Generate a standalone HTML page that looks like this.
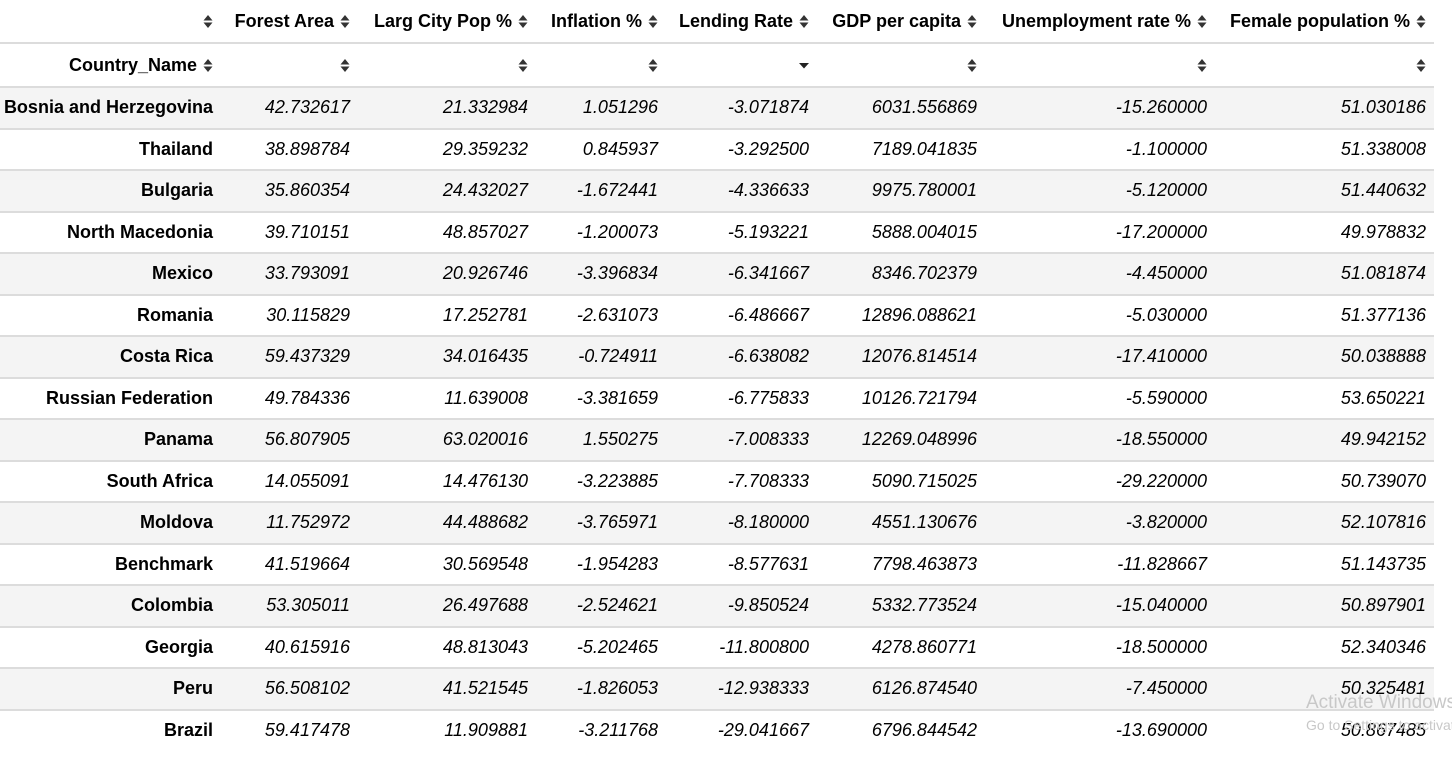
<!DOCTYPE html>
<html><head><meta charset="utf-8"><style>
body{margin:0;background:#fff;font-family:"Liberation Sans",Arial,sans-serif;color:#000;}
table{border-collapse:separate;border-spacing:0;width:1434px;table-layout:fixed;font-size:18px;}
td,th{padding:0 8px 0 0;text-align:right;white-space:nowrap;overflow:visible;}
th{font-weight:bold;height:42px;border-bottom:2px solid #dcdcdc;}
td{height:39.5px;border-bottom:2px solid #dcdcdc;font-style:italic;}
td.n{font-style:normal;font-weight:bold;padding-right:8px;}
tr.s td{background:#f4f4f4;}
.i{display:inline-block;width:10px;height:15px;margin-left:6px;vertical-align:-2px;}
</style></head><body>
<svg width="0" height="0" style="position:absolute"><defs>
<symbol id="ud" viewBox="0 0 10 15"><path d="M0.5 6.5L5 1L9.5 6.5Z M0.5 8.5L5 14L9.5 8.5Z" fill="#333"/></symbol>
<symbol id="dn" viewBox="0 0 10 15"><path d="M0 5L5 10.5L10 5Z" fill="#222"/></symbol>
</defs></svg>
<table>
<colgroup><col style="width:221px"><col style="width:137px"><col style="width:178px"><col style="width:130px"><col style="width:151px"><col style="width:168px"><col style="width:230px"><col style="width:219px"></colgroup>
<tr><th><svg class="i"><use href="#ud"/></svg></th><th>Forest Area<svg class="i"><use href="#ud"/></svg></th><th>Larg City Pop %<svg class="i"><use href="#ud"/></svg></th><th>Inflation %<svg class="i"><use href="#ud"/></svg></th><th>Lending Rate<svg class="i"><use href="#ud"/></svg></th><th>GDP per capita<svg class="i"><use href="#ud"/></svg></th><th>Unemployment rate %<svg class="i"><use href="#ud"/></svg></th><th>Female population %<svg class="i"><use href="#ud"/></svg></th></tr>
<tr><th>Country_Name<svg class="i"><use href="#ud"/></svg></th><th><svg class="i"><use href="#ud"/></svg></th><th><svg class="i"><use href="#ud"/></svg></th><th><svg class="i"><use href="#ud"/></svg></th><th><svg class="i"><use href="#dn"/></svg></th><th><svg class="i"><use href="#ud"/></svg></th><th><svg class="i"><use href="#ud"/></svg></th><th><svg class="i"><use href="#ud"/></svg></th></tr>
<tr class="s"><td class="n">Bosnia and Herzegovina</td><td>42.732617</td><td>21.332984</td><td>1.051296</td><td>-3.071874</td><td>6031.556869</td><td>-15.260000</td><td>51.030186</td></tr>
<tr><td class="n">Thailand</td><td>38.898784</td><td>29.359232</td><td>0.845937</td><td>-3.292500</td><td>7189.041835</td><td>-1.100000</td><td>51.338008</td></tr>
<tr class="s"><td class="n">Bulgaria</td><td>35.860354</td><td>24.432027</td><td>-1.672441</td><td>-4.336633</td><td>9975.780001</td><td>-5.120000</td><td>51.440632</td></tr>
<tr><td class="n">North Macedonia</td><td>39.710151</td><td>48.857027</td><td>-1.200073</td><td>-5.193221</td><td>5888.004015</td><td>-17.200000</td><td>49.978832</td></tr>
<tr class="s"><td class="n">Mexico</td><td>33.793091</td><td>20.926746</td><td>-3.396834</td><td>-6.341667</td><td>8346.702379</td><td>-4.450000</td><td>51.081874</td></tr>
<tr><td class="n">Romania</td><td>30.115829</td><td>17.252781</td><td>-2.631073</td><td>-6.486667</td><td>12896.088621</td><td>-5.030000</td><td>51.377136</td></tr>
<tr class="s"><td class="n">Costa Rica</td><td>59.437329</td><td>34.016435</td><td>-0.724911</td><td>-6.638082</td><td>12076.814514</td><td>-17.410000</td><td>50.038888</td></tr>
<tr><td class="n">Russian Federation</td><td>49.784336</td><td>11.639008</td><td>-3.381659</td><td>-6.775833</td><td>10126.721794</td><td>-5.590000</td><td>53.650221</td></tr>
<tr class="s"><td class="n">Panama</td><td>56.807905</td><td>63.020016</td><td>1.550275</td><td>-7.008333</td><td>12269.048996</td><td>-18.550000</td><td>49.942152</td></tr>
<tr><td class="n">South Africa</td><td>14.055091</td><td>14.476130</td><td>-3.223885</td><td>-7.708333</td><td>5090.715025</td><td>-29.220000</td><td>50.739070</td></tr>
<tr class="s"><td class="n">Moldova</td><td>11.752972</td><td>44.488682</td><td>-3.765971</td><td>-8.180000</td><td>4551.130676</td><td>-3.820000</td><td>52.107816</td></tr>
<tr><td class="n">Benchmark</td><td>41.519664</td><td>30.569548</td><td>-1.954283</td><td>-8.577631</td><td>7798.463873</td><td>-11.828667</td><td>51.143735</td></tr>
<tr class="s"><td class="n">Colombia</td><td>53.305011</td><td>26.497688</td><td>-2.524621</td><td>-9.850524</td><td>5332.773524</td><td>-15.040000</td><td>50.897901</td></tr>
<tr><td class="n">Georgia</td><td>40.615916</td><td>48.813043</td><td>-5.202465</td><td>-11.800800</td><td>4278.860771</td><td>-18.500000</td><td>52.340346</td></tr>
<tr class="s"><td class="n">Peru</td><td>56.508102</td><td>41.521545</td><td>-1.826053</td><td>-12.938333</td><td>6126.874540</td><td>-7.450000</td><td>50.325481</td></tr>
<tr><td class="n" style="border-bottom:none">Brazil</td><td style="border-bottom:none">59.417478</td><td style="border-bottom:none">11.909881</td><td style="border-bottom:none">-3.211768</td><td style="border-bottom:none">-29.041667</td><td style="border-bottom:none">6796.844542</td><td style="border-bottom:none">-13.690000</td><td style="border-bottom:none">50.867485</td></tr>
</table>
<div style="position:absolute;left:1306px;top:692px;font-size:19px;color:#c8c8c8;white-space:nowrap">Activate Windows</div>
<div style="position:absolute;left:1306px;top:717px;font-size:14px;color:#c8c8c8;white-space:nowrap">Go to Settings to activate</div>
</body></html>
